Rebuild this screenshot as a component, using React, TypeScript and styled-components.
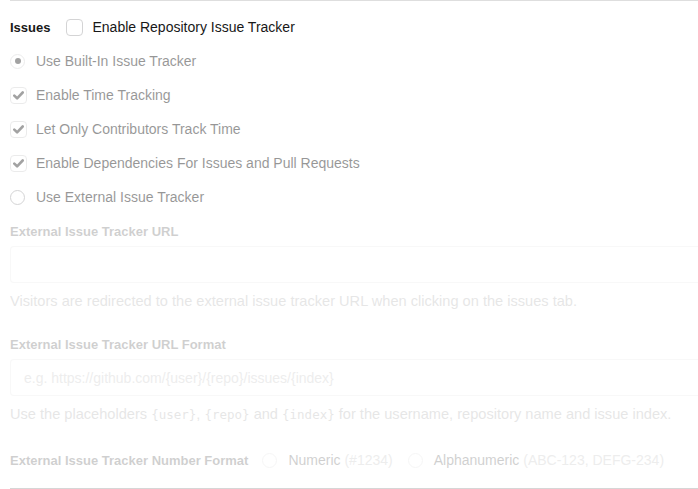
import * as React from 'react';
import styled, {createGlobalStyle} from 'styled-components';

const GlobalStyle = createGlobalStyle`
    body {
        margin: 0;
        background: #fff;
        font-family: "Liberation Sans", Arial, sans-serif;
        color: #181818;
    }
`;

const Page = styled.div`
    width: 698px;
    padding-left: 10px;
    box-sizing: border-box;
    overflow: hidden;
`;

const Divider = styled.div`
    border-top: 1px solid #dedede;
    margin-right: -20px;
`;

const Section = styled.div`
    padding-top: 16px;
    display: flex;
    flex-direction: column;
`;

const Row = styled.div<{$disabled?: boolean}>`
    display: flex;
    align-items: center;
    height: 20px;
    margin-bottom: 14px;
    opacity: ${p => p.$disabled ? 0.45 : 1};
    font-size: 14px;
`;

const InlineLabel = styled.span<{$gap: number}>`
    font-size: 13px;
    font-weight: bold;
    margin-right: ${p => p.$gap}px;
`;

const Box = styled.span`
    width: 17px;
    height: 17px;
    box-sizing: border-box;
    border: 1px solid #d4d4d5;
    border-radius: 4px;
    display: inline-flex;
    align-items: center;
    justify-content: center;
    flex-shrink: 0;
    background: #fff;
`;

const Round = styled.span`
    width: 15px;
    height: 15px;
    box-sizing: border-box;
    border: 1px solid #d4d4d5;
    border-radius: 50%;
    display: inline-flex;
    align-items: center;
    justify-content: center;
    flex-shrink: 0;
    background: #fff;
`;

const Dot = styled.span`
    width: 6px;
    height: 6px;
    border-radius: 50%;
    background: #333;
`;

const OptionText = styled.span<{$gap: number}>`
    margin-left: ${p => p.$gap}px;
    white-space: nowrap;
`;

const Faded = styled.span`
    opacity: 0.45;
`;

const Fields = styled.div`
    opacity: 0.45;
`;

const DisabledGroup = styled.div`
    opacity: 0.45;
`;

const FieldLabel = styled.div`
    font-size: 13px;
    font-weight: bold;
    line-height: 16px;
    margin-top: 3px;
    margin-bottom: 6px;
`;

const Input = styled.div`
    height: 37px;
    box-sizing: border-box;
    border: 1px solid #dedede;
    border-right: none;
    border-radius: 4px 0 0 4px;
    margin-right: -20px;
    padding: 0 13px;
    display: flex;
    align-items: center;
    color: #aaa;
    font-size: 14px;
`;

const Help = styled.div`
    font-size: 14.6px;
    color: #8a8a8a;
    margin-top: 10px;
    margin-bottom: 28px;
    white-space: nowrap;
`;

const Code = styled.code`
    font-family: "DejaVu Sans Mono", "Liberation Mono", monospace;
    font-size: 12.5px;
`;

const InlineField = styled.div`
    display: flex;
    align-items: center;
    height: 20px;
    margin-top: 1px;
    font-size: 14px;
`;

const Spacer = styled.span`
    width: 15px;
`;

const Muted = styled.span`
    color: #aaa;
`;

const Bottom = styled.div`
    border-top: 1px solid #d6d6d6;
    margin-right: -20px;
    margin-top: 18px;
`;

const Check = () => (
    <svg width='11' height='9' viewBox='0 0 11 9'>
        <path d='M1.3 4.6 L4.1 7.3 L9.7 1.5' fill='none' stroke='#333' strokeWidth='2.6' strokeLinecap='round' strokeLinejoin='round' />
    </svg>
);

const CheckRow = ({label, checked}: {label: string; checked?: boolean}) => (
    <Row $disabled>
        <Box>{checked && <Check />}</Box>
        <OptionText $gap={9}>{label}</OptionText>
    </Row>
);

const RadioRow = ({label, checked}: {label: string; checked?: boolean}) => (
    <Row $disabled>
        <Round>{checked && <Dot />}</Round>
        <OptionText $gap={11}>{label}</OptionText>
    </Row>
);

export default function App() {
    return (
        <Page>
            <GlobalStyle />
            <Divider />
            <Section>
                <Row>
                    <InlineLabel $gap={16}>Issues</InlineLabel>
                    <Box />
                    <OptionText $gap={9}>Enable Repository Issue Tracker</OptionText>
                </Row>
                <RadioRow label='Use Built-In Issue Tracker' checked />
                <CheckRow label='Enable Time Tracking' checked />
                <CheckRow label='Let Only Contributors Track Time' checked />
                <CheckRow label='Enable Dependencies For Issues and Pull Requests' checked />
                <Row>
                    <Round />
                    <OptionText $gap={11}><Faded>Use External Issue Tracker</Faded></OptionText>
                </Row>
                <DisabledGroup>
                    <Fields>
                        <FieldLabel>External Issue Tracker URL</FieldLabel>
                        <Input />
                        <Help>Visitors are redirected to the external issue tracker URL when clicking on the issues tab.</Help>
                        <FieldLabel>External Issue Tracker URL Format</FieldLabel>
                        <Input>e.g. https://github.com/{'{user}'}/{'{repo}'}/issues/{'{index}'}</Input>
                        <Help>
                            Use the placeholders <Code>{'{user}'}</Code>, <Code>{'{repo}'}</Code> and <Code>{'{index}'}</Code> for the username, repository name and issue index.
                        </Help>
                        <InlineField>
                            <InlineLabel $gap={14}>External Issue Tracker Number Format</InlineLabel>
                            <Round />
                            <OptionText $gap={11}>Numeric <Muted>(#1234)</Muted></OptionText>
                            <Spacer />
                            <Round />
                            <OptionText $gap={11}>Alphanumeric <Muted>(ABC-123, DEFG-234)</Muted></OptionText>
                        </InlineField>
                    </Fields>
                </DisabledGroup>
                <Bottom />
            </Section>
        </Page>
    );
}
